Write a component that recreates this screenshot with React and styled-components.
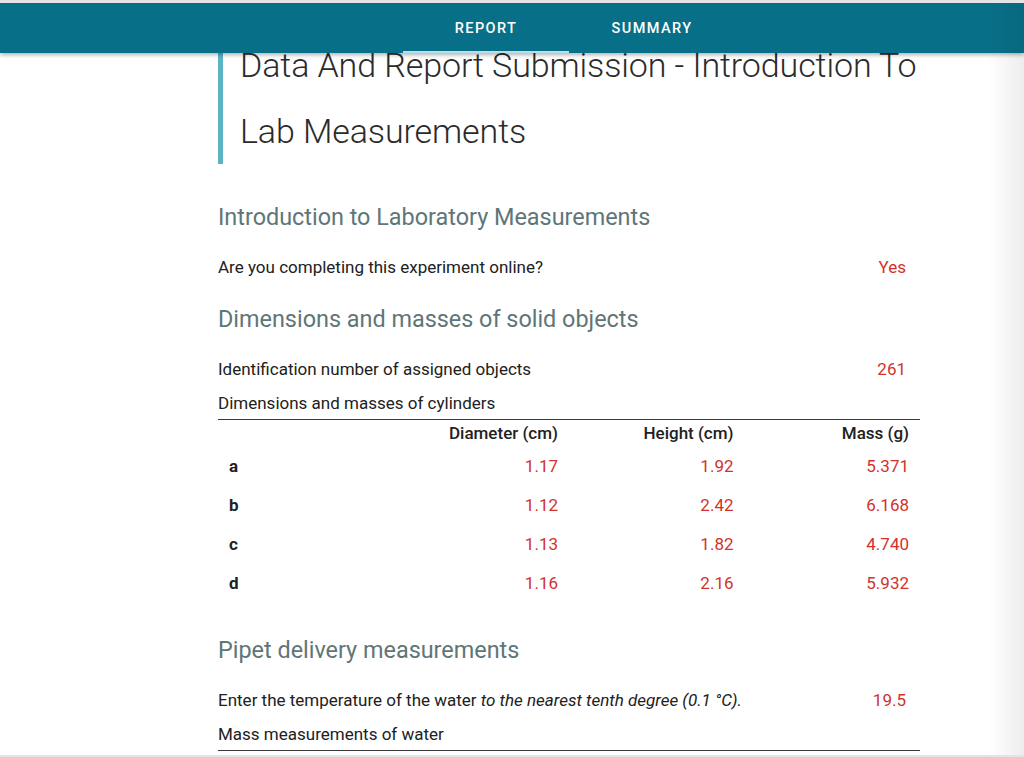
import styled, { createGlobalStyle } from 'styled-components';

const GlobalStyle = createGlobalStyle`
    html, body {
        margin: 0;
        padding: 0;
        background: #ffffff;
        font-family: Roboto, "Liberation Sans", Arial, sans-serif;
        overflow: hidden;
    }
`

const Page = styled.div`
    width: 1024px;
    height: 757px;
    overflow: hidden;
    position: relative;
    border-top: 3px solid #e2e4e5;
    box-sizing: border-box;
`

const Header = styled.header`
    position: relative;
    z-index: 2;
    height: 50px;
    background: #086f88;
    box-shadow: 0 2px 4px rgba(0, 0, 0, 0.3);
    padding-left: 218px;
`

const Tabs = styled.nav`
    width: 702px;
    height: 100%;
    display: flex;
    justify-content: center;
`

const Tab = styled.div`
    width: 166px;
    display: flex;
    align-items: center;
    justify-content: center;
    color: #ffffff;
    font-size: 14.5px;
    font-weight: 500;
    letter-spacing: 1.4px;
    box-sizing: border-box;
    padding-top: 3px;
    border-bottom: 2px solid ${props => props.active ? '#b9dde6' : 'transparent'};
`

const Content = styled.main`
    position: relative;
    z-index: 1;
    width: 702px;
    margin-left: 218px;
    margin-top: -21px;
`

const Title = styled.h1`
    margin: 0;
    border-left: 5px solid #5ab4c5;
    padding-left: 17px;
    font-size: 34px;
    font-weight: 300;
    line-height: 66px;
    color: #2b2b2b;
    letter-spacing: -0.1px;
`

const Heading = styled.h2`
    margin: ${props => props.top}px 0 18px;
    font-size: 23.4px;
    font-weight: 400;
    line-height: 30px;
    color: #5e7678;
`

const Field = styled.div`
    height: 34px;
    display: flex;
    align-items: center;
    justify-content: space-between;
    font-size: 17px;
    color: #212121;
    border-bottom: ${props => props.ruled ? '1px solid #3a3a3a' : 'none'};
    box-sizing: border-box;
    padding-top: ${props => props.ruled ? 1 : 0}px;
`

const Value = styled.span`
    color: #d2322b;
    padding-right: 14px;
`

const Table = styled.table`
    width: 100%;
    border-collapse: collapse;
    table-layout: fixed;
    font-size: 17px;
    margin-bottom: 33px;
`

const HeadCell = styled.th`
    height: 26px;
    padding: 0 11px;
    text-align: right;
    font-weight: 500;
    color: #212121;
    vertical-align: middle;
`

const LabelCell = styled.td`
    height: 39px;
    padding: 0 11px;
    text-align: left;
    font-weight: 700;
    color: #212121;
    vertical-align: middle;
`

const NumCell = styled.td`
    height: 39px;
    padding: 0 11px;
    text-align: right;
    color: #d2322b;
    vertical-align: middle;
`

const RightShade = styled.div`
    position: absolute;
    top: 0;
    right: 0;
    bottom: 0;
    width: 36px;
    z-index: 3;
    pointer-events: none;
    background: linear-gradient(to right, rgba(0, 0, 0, 0), rgba(0, 0, 0, 0.07));
`

const BottomEdge = styled.div`
    position: absolute;
    left: 0;
    right: 0;
    bottom: 0;
    height: 2px;
    z-index: 3;
    background: #e4e4e4;
`

const cylinders = [
    { id: 'a', diameter: '1.17', height: '1.92', mass: '5.371' },
    { id: 'b', diameter: '1.12', height: '2.42', mass: '6.168' },
    { id: 'c', diameter: '1.13', height: '1.82', mass: '4.740' },
    { id: 'd', diameter: '1.16', height: '2.16', mass: '5.932' },
]

export default function App() {
    return (
        <Page>
            <GlobalStyle />
            <Header>
                <Tabs>
                    <Tab active>REPORT</Tab>
                    <Tab>SUMMARY</Tab>
                </Tabs>
            </Header>

            <Content>
                <Title>
                    Data And Report Submission - Introduction To<br />
                    Lab Measurements
                </Title>

                <Heading top={38}>Introduction to Laboratory Measurements</Heading>
                <Field>
                    <span>Are you completing this experiment online?</span>
                    <Value>Yes</Value>
                </Field>

                <Heading top={20}>Dimensions and masses of solid objects</Heading>
                <Field>
                    <span>Identification number of assigned objects</span>
                    <Value>261</Value>
                </Field>
                <Field ruled>
                    <span>Dimensions and masses of cylinders</span>
                </Field>
                <Table>
                    <thead>
                        <tr>
                            <HeadCell></HeadCell>
                            <HeadCell>Diameter (cm)</HeadCell>
                            <HeadCell>Height (cm)</HeadCell>
                            <HeadCell>Mass (g)</HeadCell>
                        </tr>
                    </thead>
                    <tbody>
                        {cylinders.map(c => (
                            <tr key={c.id}>
                                <LabelCell>{c.id}</LabelCell>
                                <NumCell>{c.diameter}</NumCell>
                                <NumCell>{c.height}</NumCell>
                                <NumCell>{c.mass}</NumCell>
                            </tr>
                        ))}
                    </tbody>
                </Table>

                <Heading top={0}>Pipet delivery measurements</Heading>
                <Field>
                    <span>Enter the temperature of the water <i>to the nearest tenth degree (0.1 °C).</i></span>
                    <Value>19.5</Value>
                </Field>
                <Field ruled>
                    <span>Mass measurements of water</span>
                </Field>
            </Content>

            <RightShade />
            <BottomEdge />
        </Page>
    )
}
